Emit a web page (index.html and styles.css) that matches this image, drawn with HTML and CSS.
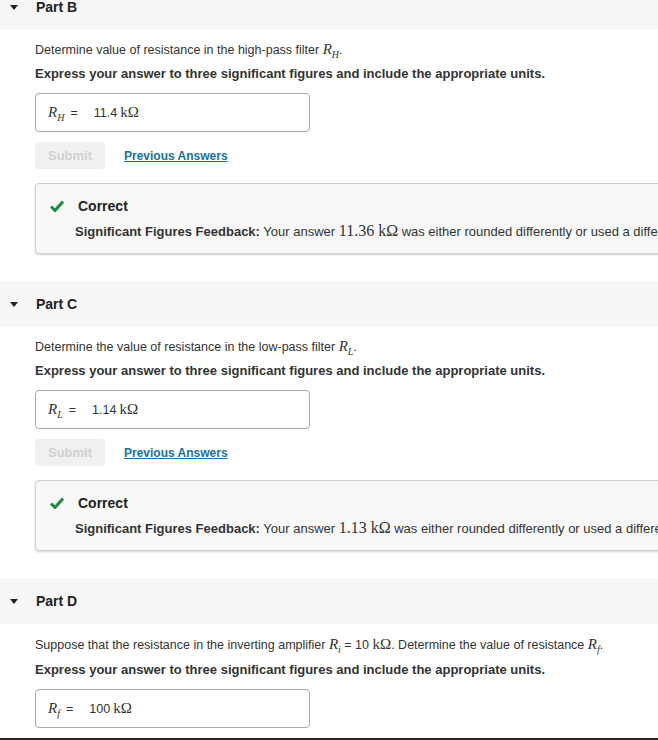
FILE: index.html
```html
<!DOCTYPE html>
<html lang="en">
	<head>
		<meta charset="UTF-8" />
		<meta name="viewport" content="width=device-width, initial-scale=1.0" />
		<title>Parts B, C and D</title>
		<link rel="stylesheet" href="styles.css">
	</head>
	<body>
		<div class="page">
			<section class="part">
				<div class="part-head"><span class="caret"></span>Part B</div>
				<div class="part-body">
					<p class="prompt">Determine value of resistance in the high-pass filter <span class="math"><i>R</i><sub><i>H</i></sub></span>.</p>
					<p class="instr">Express your answer to three significant figures and include the appropriate units.</p>
					<div class="answer">
						<span class="math"><i>R</i><sub><i>H</i></sub></span>
						<span class="eq">=</span>
						<span class="value">11.4</span>
						<span class="unit">kΩ</span>
					</div>
					<div class="actions">
						<button class="submit" disabled>Submit</button>
						<a href="#" class="prev">Previous Answers</a>
					</div>
					<div class="feedback">
						<div class="fb-title">
							<svg class="check" width="14" height="12" viewBox="0 0 14 12"><path d="M1 6.5 L5 10.5 L13 1.5" fill="none" stroke="#1f8a3b" stroke-width="3"/></svg>
							Correct
						</div>
						<div class="fb-text"><b>Significant Figures Feedback:</b> Your answer <span class="num">11.36 kΩ</span> was either rounded differently or used a different number of significant figures than required for this part.</div>
					</div>
				</div>
			</section>

			<section class="part">
				<div class="part-head"><span class="caret"></span>Part C</div>
				<div class="part-body">
					<p class="prompt">Determine the value of resistance in the low-pass filter <span class="math"><i>R</i><sub><i>L</i></sub></span>.</p>
					<p class="instr">Express your answer to three significant figures and include the appropriate units.</p>
					<div class="answer">
						<span class="math"><i>R</i><sub><i>L</i></sub></span>
						<span class="eq">=</span>
						<span class="value">1.14</span>
						<span class="unit">kΩ</span>
					</div>
					<div class="actions">
						<button class="submit" disabled>Submit</button>
						<a href="#" class="prev">Previous Answers</a>
					</div>
					<div class="feedback">
						<div class="fb-title">
							<svg class="check" width="14" height="12" viewBox="0 0 14 12"><path d="M1 6.5 L5 10.5 L13 1.5" fill="none" stroke="#1f8a3b" stroke-width="3"/></svg>
							Correct
						</div>
						<div class="fb-text"><b>Significant Figures Feedback:</b> Your answer <span class="num">1.13 kΩ</span> was either rounded differently or used a different number of significant figures than required for this part.</div>
					</div>
				</div>
			</section>

			<section class="part">
				<div class="part-head"><span class="caret"></span>Part D</div>
				<div class="part-body">
					<p class="prompt prompt-tall">Suppose that the resistance in the inverting amplifier <span class="math"><i>R</i><sub><i>i</i></sub></span> = 10 <span class="unit">kΩ</span>. Determine the value of resistance <span class="math"><i>R</i><sub><i>f</i></sub></span>.</p>
					<p class="instr">Express your answer to three significant figures and include the appropriate units.</p>
					<div class="answer">
						<span class="math"><i>R</i><sub><i>f</i></sub></span>
						<span class="eq">=</span>
						<span class="value">100</span>
						<span class="unit">kΩ</span>
					</div>
				</div>
			</section>
			<div class="edge"></div>
		</div>
	</body>
</html>
```

FILE: styles.css
```css
body {
	margin: 0;
	overflow: hidden;
	font-family: 'Liberation Sans', Arial, sans-serif;
	color: #333;
	background-color: #fff;
}
.page {
	width: 900px;
	margin-top: -16px;
}
.part {
	margin-bottom: 27px;
}
.part-head {
	height: 46px;
	display: flex;
	align-items: center;
	background-color: #f7f7f7;
	font-size: 14px;
	font-weight: bold;
	color: #222;
}
.caret {
	width: 0;
	height: 0;
	margin: 0 18px 0 10px;
	border-left: 4.5px solid transparent;
	border-right: 4.5px solid transparent;
	border-top: 5px solid #222;
}
.part-body {
	padding: 10px 0 0 35px;
}
.prompt {
	margin: 0;
	height: 18px;
	font-size: 12.5px;
	line-height: 18px;
}
.prompt-tall {
	height: 20px;
	line-height: 20px;
}
.instr {
	margin: 7px 0 0;
	height: 18px;
	font-size: 13px;
	font-weight: bold;
	line-height: 18px;
}
.math {
	font-family: 'Liberation Serif', 'Times New Roman', serif;
	font-size: 15px;
}
.math sub {
	font-size: 10px;
	line-height: 0;
}
.unit {
	font-family: 'Liberation Serif', 'Times New Roman', serif;
	font-size: 15px;
}
.num {
	font-family: 'Liberation Serif', 'Times New Roman', serif;
	font-size: 16px;
}
.answer {
	margin-top: 10px;
	width: 275px;
	height: 39px;
	box-sizing: border-box;
	border: 1px solid #a8a8a8;
	border-radius: 4px;
	padding-left: 12px;
	display: flex;
	align-items: center;
	font-size: 12.5px;
}
.answer .eq {
	margin: 0 8px 0 6px;
}
.answer .value {
	margin-left: 8px;
	margin-right: 3px;
}
.actions {
	margin-top: 10px;
	display: flex;
	align-items: center;
}
.submit {
	width: 70px;
	height: 27px;
	border: none;
	border-radius: 3px;
	background-color: #f0f0f0;
	color: #d0d0d0;
	font-family: 'Liberation Sans', Arial, sans-serif;
	font-size: 13px;
	font-weight: bold;
	padding: 0;
}
.prev {
	margin-left: 19px;
	color: #1a6fa3;
	font-size: 12px;
	font-weight: bold;
}
.feedback {
	margin-top: 14px;
	height: 71px;
	box-sizing: border-box;
	border: 1px solid #cfcfcf;
	border-radius: 4px;
	background-color: #f8f8f8;
	box-shadow: 0 1px 2px rgba(0, 0, 0, 0.18);
	padding: 12px 0 0 14px;
}
.fb-title {
	display: flex;
	align-items: center;
	font-size: 14px;
	font-weight: bold;
	color: #222;
	height: 20px;
}
.check {
	margin-right: 14px;
}
.fb-text {
	margin-top: 6px;
	padding-left: 25px;
	font-size: 13px;
	white-space: nowrap;
	line-height: 18px;
}
.edge {
	height: 10px;
	margin-top: -17px;
	background-color: #2b241b;
}
```
